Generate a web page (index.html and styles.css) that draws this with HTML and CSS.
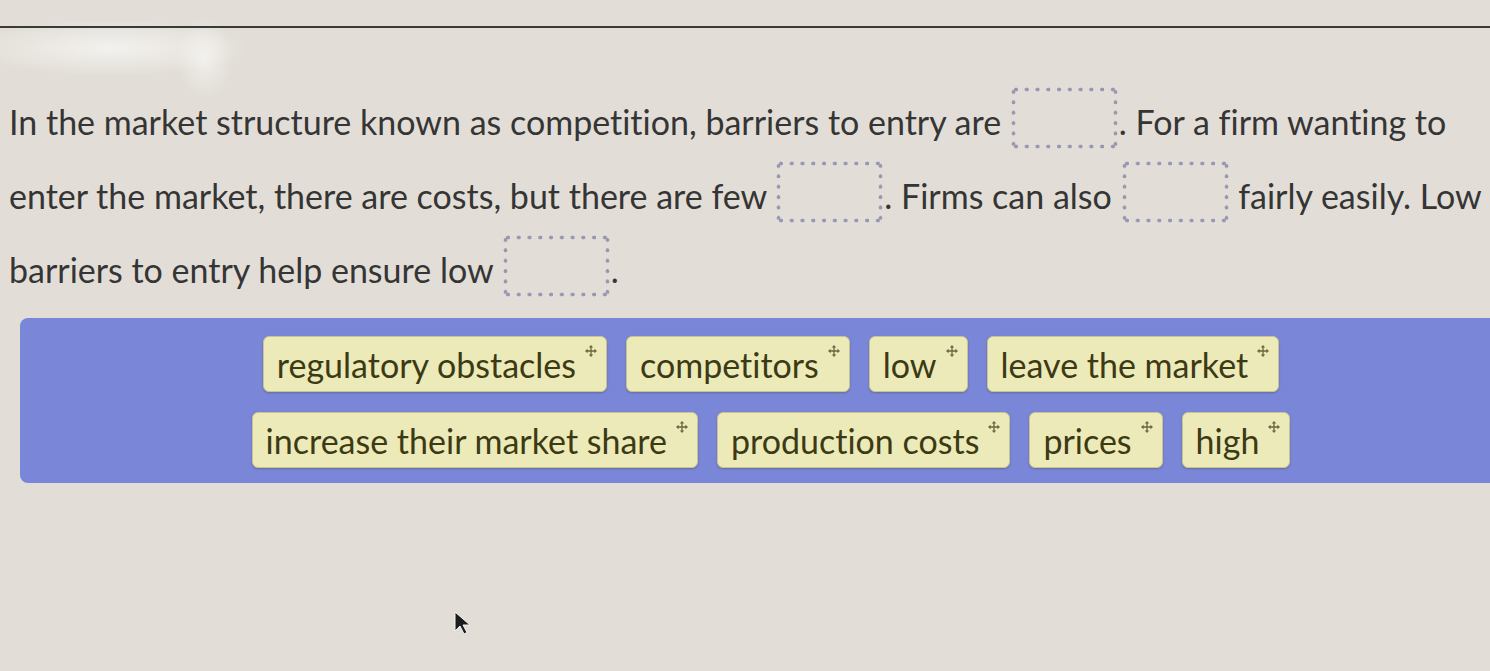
FILE: index.html
```html
<!DOCTYPE html>
<html>
<head>
<meta charset="utf-8">
<link rel="stylesheet" href="styles.css">
</head>
<body>
<div class="page">
  <div class="rule"></div>
  <p class="question">In the market structure known as competition, barriers to entry are <span class="blank"></span>. For a firm wanting to enter the market, there are costs, but there are few <span class="blank"></span>. Firms can also <span class="blank"></span> fairly easily. Low barriers to entry help ensure low <span class="blank"></span>.</p>
  <div class="bank">
    <div class="row">
      <div class="chip">regulatory obstacles<svg class="mv" viewBox="0 0 12 12"><path class="ln" d="M6 2v8M2 6h8"/><path d="M6 0l-2.2 2.6h4.4zM6 12l-2.2-2.6h4.4zM0 6l2.6-2.2v4.4zM12 6l-2.6-2.2v4.4z"/></svg></div>
      <div class="chip">competitors<svg class="mv" viewBox="0 0 12 12"><path class="ln" d="M6 2v8M2 6h8"/><path d="M6 0l-2.2 2.6h4.4zM6 12l-2.2-2.6h4.4zM0 6l2.6-2.2v4.4zM12 6l-2.6-2.2v4.4z"/></svg></div>
      <div class="chip">low<svg class="mv" viewBox="0 0 12 12"><path class="ln" d="M6 2v8M2 6h8"/><path d="M6 0l-2.2 2.6h4.4zM6 12l-2.2-2.6h4.4zM0 6l2.6-2.2v4.4zM12 6l-2.6-2.2v4.4z"/></svg></div>
      <div class="chip">leave the market<svg class="mv" viewBox="0 0 12 12"><path class="ln" d="M6 2v8M2 6h8"/><path d="M6 0l-2.2 2.6h4.4zM6 12l-2.2-2.6h4.4zM0 6l2.6-2.2v4.4zM12 6l-2.6-2.2v4.4z"/></svg></div>
    </div>
    <div class="row">
      <div class="chip">increase their market share<svg class="mv" viewBox="0 0 12 12"><path class="ln" d="M6 2v8M2 6h8"/><path d="M6 0l-2.2 2.6h4.4zM6 12l-2.2-2.6h4.4zM0 6l2.6-2.2v4.4zM12 6l-2.6-2.2v4.4z"/></svg></div>
      <div class="chip">production costs<svg class="mv" viewBox="0 0 12 12"><path class="ln" d="M6 2v8M2 6h8"/><path d="M6 0l-2.2 2.6h4.4zM6 12l-2.2-2.6h4.4zM0 6l2.6-2.2v4.4zM12 6l-2.6-2.2v4.4z"/></svg></div>
      <div class="chip">prices<svg class="mv" viewBox="0 0 12 12"><path class="ln" d="M6 2v8M2 6h8"/><path d="M6 0l-2.2 2.6h4.4zM6 12l-2.2-2.6h4.4zM0 6l2.6-2.2v4.4zM12 6l-2.6-2.2v4.4z"/></svg></div>
      <div class="chip">high<svg class="mv" viewBox="0 0 12 12"><path class="ln" d="M6 2v8M2 6h8"/><path d="M6 0l-2.2 2.6h4.4zM6 12l-2.2-2.6h4.4zM0 6l2.6-2.2v4.4zM12 6l-2.6-2.2v4.4z"/></svg></div>
    </div>
  </div>
  <svg class="cursor" viewBox="0 0 16 24"><path d="M1 1v19l5-5 4 8 3-1.5-4-7.5h7z" fill="#1c1c1c" stroke="#f4f4f4" stroke-width="1"/></svg>
</div>
</body>
</html>
```
FILE: styles.css
```css
html, body {
  margin: 0;
  padding: 0;
  width: 1490px;
  height: 671px;
  overflow: hidden;
  background: #e2ded7;
}
.page {
  position: relative;
  width: 1490px;
  height: 671px;
  overflow: hidden;
  font-family: Lato, "Open Sans", sans-serif;
  font-variant-ligatures: none;
  color: #353535;
  background: radial-gradient(ellipse 140px 28px at 110px 48px, rgba(255,255,255,0.6), rgba(255,255,255,0) 100%),
              radial-gradient(ellipse 28px 40px at 205px 58px, rgba(255,255,255,0.5), rgba(255,255,255,0) 100%),
              #e2ded7;
}
.rule {
  height: 2px;
  background: #3a3a3a;
  margin-top: 26px;
}
.question {
  margin: 57px 0 0 9px;
  font-size: 34px;
  line-height: 74px;
  width: 1478px;
}
.blank {
  display: inline-block;
  width: 107px;
  height: 62px;
  vertical-align: -14px;
  margin: 0 1px;
  box-sizing: border-box;
  background:
    radial-gradient(circle, #9797b2 1.7px, transparent 2.2px) left top / 10px 5px space no-repeat,
    radial-gradient(circle, #9797b2 1.7px, transparent 2.2px) left bottom / 10px 5px space no-repeat,
    radial-gradient(circle, #9797b2 1.7px, transparent 2.2px) left top / 5px 10px no-repeat space,
    radial-gradient(circle, #9797b2 1.7px, transparent 2.2px) right top / 5px 10px no-repeat space;
}
.bank {
  margin: 11px 0 0 20px;
  width: 1502px;
  height: 165px;
  background: #7a86d7;
  border-radius: 8px;
  box-sizing: border-box;
  padding: 18px 0 0 0;
  display: flex;
  flex-direction: column;
  align-items: center;
  gap: 20px;
}
.row {
  display: flex;
  gap: 19px;
}
.chip {
  position: relative;
  height: 56px;
  box-sizing: border-box;
  padding: 0 30px 0 13px;
  display: flex;
  align-items: center;
  background: #eceab8;
  border: 1px solid #c9c493;
  border-radius: 6px;
  box-shadow: 0 1px 2px rgba(60,60,40,0.35);
  font-size: 34px;
  color: #3c3a14;
}
.mv {
  position: absolute;
  top: 8px;
  right: 9px;
  width: 12px;
  height: 12px;
  fill: #6a6640;
}
.mv .ln {
  fill: none;
  stroke: #6a6640;
  stroke-width: 1.3;
}
.cursor {
  position: absolute;
  left: 454px;
  top: 611px;
  width: 16px;
  height: 24px;
}
```
